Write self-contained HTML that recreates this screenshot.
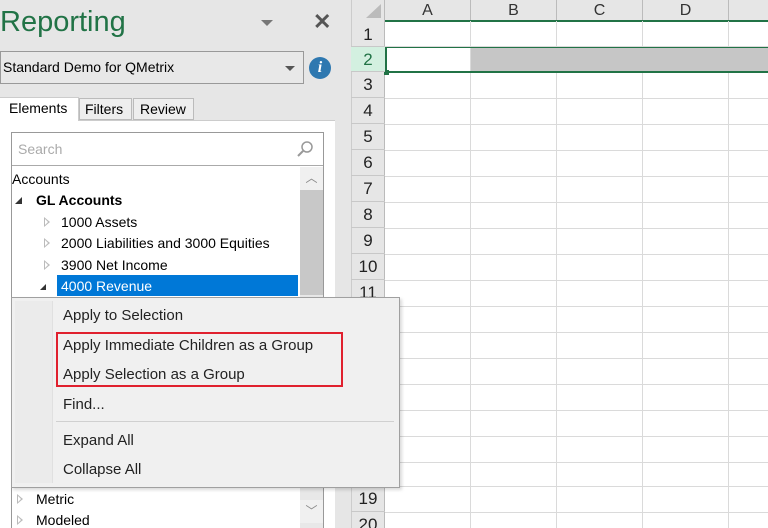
<!DOCTYPE html>
<html><head><style>
*{margin:0;padding:0;box-sizing:border-box}
html,body{width:768px;height:528px;overflow:hidden}
body{background:#fff;font-family:"Liberation Sans",sans-serif;position:relative}
.a{position:absolute}
.t{font-size:14px;color:#000;white-space:nowrap}
.rh{position:absolute;left:351px;width:34px;text-align:center;font-size:17px;color:#222;font-family:"Liberation Sans",sans-serif;border-bottom:1px solid #c8c8c8}
.hl{position:absolute;left:385px;right:0;height:1px;background:#dadada}
.vl{position:absolute;top:21px;bottom:0;width:1px;background:#dadada}
.ch{position:absolute;top:0;height:21px;font-size:16px;color:#333;text-align:center;line-height:21px;font-family:"Liberation Sans",sans-serif;border-right:1px solid #bbb}
.mi{position:absolute;left:63px;font-size:15px;color:#222;font-family:"Liberation Sans",sans-serif;white-space:nowrap}
.tri{position:absolute;width:0;height:0;border-top:5px solid transparent;border-bottom:5px solid transparent;border-left:6px solid #bbb}
.tri:after{content:"";position:absolute;left:-5px;top:-3px;border-top:3px solid transparent;border-bottom:3px solid transparent;border-left:3px solid #fff}
.dn{position:absolute;width:0;height:0;border-left:8px solid transparent;border-bottom:8px solid #333}
</style></head><body>
<div class="a" style="left:0;top:0;width:351px;height:528px;background:#e6e6e6"></div>
<div class="a" style="left:0;top:6px;font-size:29px;color:#217346;font-family:'Liberation Sans',sans-serif;">Reporting</div>
<div class="a" style="left:261px;top:20px;border-left:6px solid transparent;border-right:6px solid transparent;border-top:6px solid #777"></div>
<div class="a" style="left:313px;top:9px;font-size:22px;color:#555;font-weight:bold">✕</div>
<div class="a" style="left:0;top:51px;width:304px;height:33px;border:1px solid #999;background:#e8e8e8"></div>
<div class="a t" style="left:3px;top:59px;font-size:14px">Standard Demo for QMetrix</div>
<div class="a" style="left:285px;top:66px;border-left:5px solid transparent;border-right:5px solid transparent;border-top:5px solid #555"></div>
<div class="a" style="left:309px;top:57px;width:22px;height:22px;border-radius:50%;background:#2e78b0;color:#fff;font-weight:bold;font-style:italic;font-family:'Liberation Serif',serif;font-size:16px;text-align:center;line-height:22px">i</div>
<div class="a" style="left:0;top:120px;width:335px;height:408px;background:#fff;border-top:1px solid #ccc"></div>
<div class="a" style="left:0;top:97px;width:79px;height:24px;background:#fff;border:1px solid #ccc;border-bottom:none;border-left:none"></div>
<div class="a t" style="left:9px;top:100px">Elements</div>
<div class="a" style="left:79px;top:98px;width:53px;height:22px;border:1px solid #bbb;background:#eee"></div>
<div class="a t" style="left:85px;top:101px">Filters</div>
<div class="a" style="left:133px;top:98px;width:61px;height:22px;border:1px solid #bbb;background:#eee"></div>
<div class="a t" style="left:140px;top:101px">Review</div>
<div class="a" style="left:11px;top:132px;width:313px;height:400px;border:1px solid #999;background:#fff"></div>
<div class="a" style="left:12px;top:133px;width:311px;height:33px;border-bottom:1px solid #aaa"></div>
<div class="a t" style="left:18px;top:141px;color:#aaa">Search</div>
<svg class="a" style="left:296px;top:140px" width="18" height="18"><circle cx="11" cy="7" r="5" fill="none" stroke="#999" stroke-width="1.5"/><line x1="7" y1="11" x2="2" y2="16" stroke="#999" stroke-width="2"/></svg>
<div class="a" style="left:300px;top:167px;width:23px;height:361px;background:#e8e8e8"></div>
<div class="a" style="left:300px;top:167px;width:23px;height:23px;background:#f0f0f0;color:#888;font-size:12px;text-align:center;line-height:23px">︿</div>
<div class="a" style="left:300px;top:190px;width:23px;height:105px;background:#c8c8c8"></div>
<div class="a" style="left:300px;top:500px;width:23px;height:23px;background:#f0f0f0;color:#888;font-size:12px;text-align:center;line-height:23px">﹀</div>
<div class="a t" style="left:12px;top:171px">Accounts</div>
<div class="dn" style="left:15px;top:197px;border-left-width:7px;border-bottom-width:7px"></div>
<div class="a t" style="left:36px;top:192px;font-weight:bold">GL Accounts</div>
<div class="tri" style="left:44px;top:217px"></div>
<div class="a t" style="left:61px;top:214px">1000 Assets</div>
<div class="tri" style="left:44px;top:238px"></div>
<div class="a t" style="left:61px;top:235px">2000 Liabilities and 3000 Equities</div>
<div class="tri" style="left:44px;top:260px"></div>
<div class="a t" style="left:61px;top:257px">3900 Net Income</div>
<div class="dn" style="left:40px;top:284px;border-left-width:6px;border-bottom-width:6px"></div>
<div class="a" style="left:57px;top:275px;width:241px;height:21px;background:#0078d7"></div>
<div class="a t" style="left:61px;top:278px;color:#fff">4000 Revenue</div>
<div class="tri" style="left:17px;top:494px"></div>
<div class="a t" style="left:36px;top:491px">Metric</div>
<div class="tri" style="left:17px;top:515px"></div>
<div class="a t" style="left:36px;top:512px">Modeled</div>
<div class="a" style="left:351px;top:0;width:34px;height:528px;background:#e6e6e6;border-left:1px solid #ccc;border-right:1px solid #bbb"></div>
<div class="a" style="left:385px;top:0;width:383px;height:21px;background:#e6e6e6"></div>
<div class="a" style="left:366px;top:4px;border-left:15px solid transparent;border-bottom:14px solid #bbb"></div>
<div class="ch" style="left:385px;width:86px">A</div>
<div class="ch" style="left:471px;width:86px">B</div>
<div class="ch" style="left:557px;width:86px">C</div>
<div class="ch" style="left:643px;width:86px">D</div>
<div class="ch" style="left:729px;width:60px"></div>
<div class="a" style="left:385px;top:20px;width:383px;height:2px;background:#217346"></div>
<div class="vl" style="left:470px"></div><div class="vl" style="left:556px"></div><div class="vl" style="left:642px"></div><div class="vl" style="left:728px"></div>
<div class="a" style="left:471px;top:47px;width:297px;height:24px;background:#c6c6c6"></div>
<div class="a" style="left:385px;top:46px;width:383px;height:27px;border:2px solid #217346;border-right:none"></div>
<div class="a" style="left:384px;top:70px;width:5px;height:5px;background:#217346"></div>
<div class="a" style="left:351px;top:47px;width:34px;height:25px;background:#d3f0e0"></div>
<div class="hl" style="top:46px"></div><div class="hl" style="top:98px"></div><div class="hl" style="top:124px"></div><div class="hl" style="top:150px"></div><div class="hl" style="top:176px"></div><div class="hl" style="top:202px"></div><div class="hl" style="top:228px"></div><div class="hl" style="top:254px"></div><div class="hl" style="top:280px"></div><div class="hl" style="top:306px"></div><div class="hl" style="top:332px"></div><div class="hl" style="top:358px"></div><div class="hl" style="top:384px"></div><div class="hl" style="top:410px"></div><div class="hl" style="top:436px"></div><div class="hl" style="top:462px"></div><div class="hl" style="top:486px"></div><div class="hl" style="top:512px"></div>
<div class="rh" style="top:22px;height:25px;line-height:25px">1</div>
<div class="rh" style="top:47px;height:25px;line-height:25px;color:#217346">2</div>
<div class="rh" style="top:72px;height:26px;line-height:26px">3</div>
<div class="rh" style="top:98px;height:26px;line-height:26px">4</div>
<div class="rh" style="top:124px;height:26px;line-height:26px">5</div>
<div class="rh" style="top:150px;height:26px;line-height:26px">6</div>
<div class="rh" style="top:176px;height:26px;line-height:26px">7</div>
<div class="rh" style="top:202px;height:26px;line-height:26px">8</div>
<div class="rh" style="top:228px;height:26px;line-height:26px">9</div>
<div class="rh" style="top:254px;height:26px;line-height:26px">10</div>
<div class="rh" style="top:280px;height:26px;line-height:26px">11</div>
<div class="rh" style="top:486px;height:26px;line-height:26px">19</div>
<div class="rh" style="top:512px;height:26px;line-height:26px">20</div>
<div class="a" style="left:11px;top:297px;width:389px;height:191px;background:#f0f0f0;border:1px solid #a0a0a0;box-shadow:2px 2px 3px rgba(0,0,0,.15)"></div>
<div class="a" style="left:15px;top:301px;width:38px;height:182px;background:#ebebeb;border-right:1px solid #e0e0e0"></div>
<div class="mi" style="top:307px">Apply to Selection</div>
<div class="a" style="left:56px;top:332px;width:287px;height:55px;border:2px solid #e0202e"></div>
<div class="mi" style="top:337px">Apply Immediate Children as a Group</div>
<div class="mi" style="top:366px">Apply Selection as a Group</div>
<div class="mi" style="top:396px">Find...</div>
<div class="a" style="left:56px;top:421px;width:338px;height:1px;background:#d0d0d0"></div>
<div class="mi" style="top:432px">Expand All</div>
<div class="mi" style="top:461px">Collapse All</div>
</body></html>
